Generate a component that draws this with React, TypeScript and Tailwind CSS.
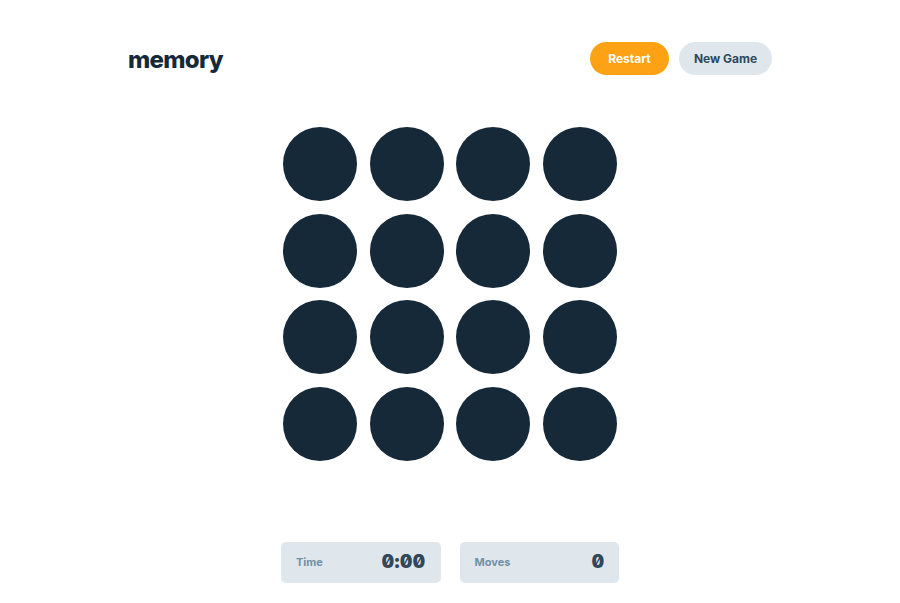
import React from "react";

export default function App() {
  const cells = Array.from({ length: 16 });
  return (
    <div className="min-h-[603px] w-full bg-white" style={{ fontFamily: "Inter, 'Liberation Sans', sans-serif" }}>
      <div className="mx-auto w-[644px] pt-[42px]">
        <header className="flex items-center justify-between h-[33px]">
          <h1 className="text-[24px] font-extrabold text-[#152938] tracking-[-0.7px] leading-none mt-[2px]">memory</h1>
          <div className="flex gap-[10px]">
            <button className="h-[33px] w-[79px] rounded-full bg-[#FDA214] text-white text-[12px] font-bold">Restart</button>
            <button className="h-[33px] w-[93px] rounded-full bg-[#DFE7EC] text-[#304859] text-[12px] font-bold">New Game</button>
          </div>
        </header>
      </div>
      <main className="mx-auto mt-[52px] grid w-[334px] grid-cols-4 gap-x-[12.5px] gap-y-[12.5px]">
        {cells.map((_, i) => (
          <div key={i} className="h-[74px] w-[74px] rounded-full bg-[#152938]" />
        ))}
      </main>
      <footer className="mx-auto mt-[81px] flex w-[338px] gap-[19px]">
        <div className="flex h-[41px] flex-1 items-center justify-between rounded-[5px] bg-[#DFE7EC] px-[15px]">
          <span className="text-[11px] font-bold text-[#7191A5]">Time</span>
          <span className="text-[19px] font-black text-[#304859] slashed-zero tabular-nums tracking-[0.5px]">0:00</span>
        </div>
        <div className="flex h-[41px] flex-1 items-center justify-between rounded-[5px] bg-[#DFE7EC] px-[15px]">
          <span className="text-[11px] font-bold text-[#7191A5]">Moves</span>
          <span className="text-[19px] font-black text-[#304859] slashed-zero tabular-nums">0</span>
        </div>
      </footer>
    </div>
  );
}
